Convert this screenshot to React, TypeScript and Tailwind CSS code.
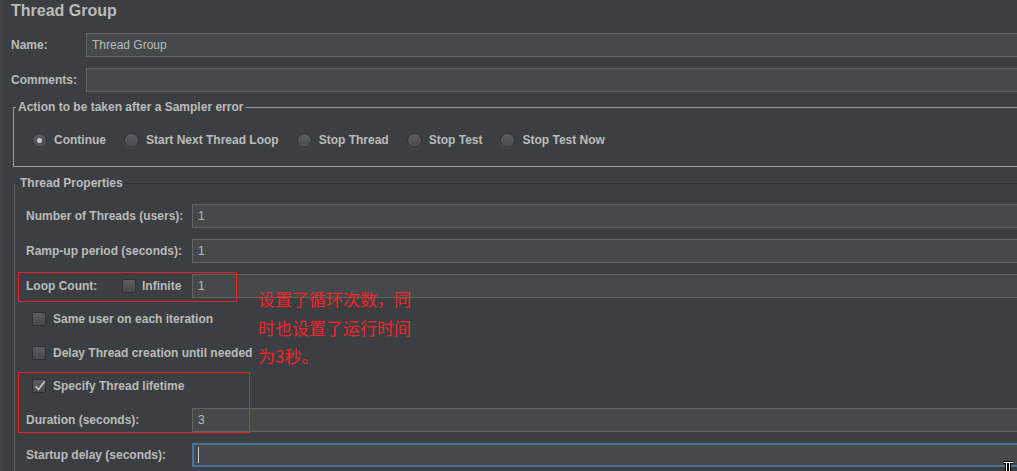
import React from "react";

const Radio = ({ label, checked }: { label: string; checked?: boolean }) => (
  <div className="flex items-center gap-[7px]">
    <div className="w-[15px] h-[15px] rounded-full border border-[#2e3032] bg-[linear-gradient(#5a5e60,#474b4d)] flex items-center justify-center shadow-[0_1px_0_#505355]">
      {checked && <div className="w-[5px] h-[5px] rounded-full bg-[#c8c8c8]" />}
    </div>
    <span className="text-[12px] font-bold leading-[16px]">{label}</span>
  </div>
);

const Check = ({ checked }: { checked?: boolean }) => (
  <div className="w-[14px] h-[14px] rounded-[2px] border border-[#2e3032] bg-[linear-gradient(#595d5f,#474a4c)] relative shrink-0">
    {checked && (
      <svg className="absolute left-[1px] top-[0px]" width="12" height="12" viewBox="0 0 12 12">
        <path d="M1.5 6.2 L4.5 9.5 L10.8 1.2" fill="none" stroke="#c4c4c4" strokeWidth="1.7" />
      </svg>
    )}
  </div>
);

const Input = ({ value, focus }: { value?: string; focus?: boolean }) =>
  focus ? (
    <div className="flex-1 h-[24px] bg-[#45494a] border-2 border-[#4a6f98] pl-[4px] flex items-center">
      <div className="w-[1px] h-[16px] bg-[#c8c8c8]" />
    </div>
  ) : (
    <div className="flex-1 h-[24px] bg-[#45494a] border border-[#646464] pl-[5px] text-[12px] leading-[22px] font-normal">
      {value}
    </div>
  );

const PropRow = ({ label, value, focus }: { label: string; value?: string; focus?: boolean }) => (
  <div className="flex items-center h-[24px]">
    <div className="w-[166px] text-[12px] font-bold">{label}</div>
    <Input value={value} focus={focus} />
  </div>
);

const CheckRow = ({ label, checked }: { label: string; checked?: boolean }) => (
  <div className="flex items-center h-[14px] ml-[6px] gap-[7px]">
    <Check checked={checked} />
    <span className="text-[12px] font-bold">{label}</span>
  </div>
);

export default function App() {
  return (
    <div className="w-[1017px] h-[471px] overflow-hidden relative bg-[#3c3f41] text-[#bbbbbb] font-['Liberation_Sans','Noto_Sans_CJK_SC',sans-serif] shadow-[inset_3px_0_0_#424547]">
      <div className="w-[1045px]">
        <div className="pl-[11px] h-[22px] leading-[22px] text-[16px] font-bold">Thread Group</div>

        <div className="pl-[11px] mt-[11px] flex items-center h-[24px]">
          <div className="w-[75px] text-[12px] font-bold">Name:</div>
          <Input value="Thread Group" />
        </div>
        <div className="pl-[11px] mt-[11px] flex items-center h-[24px]">
          <div className="w-[75px] text-[12px] font-bold">Comments:</div>
          <Input value="" />
        </div>

        <fieldset className="mt-[8px] ml-[13px] border border-[#9b9b9b]">
          <legend className="ml-[2px] px-[2px] text-[12px] font-bold leading-[14px]">Action to be taken after a Sampler error</legend>
          <div className="pt-[18px] pb-[18px] pl-[18px]">
            <div className="flex items-center gap-[18px] h-[16px]">
              <Radio label="Continue" checked />
              <Radio label="Start Next Thread Loop" />
              <Radio label="Stop Thread" />
              <Radio label="Stop Test" />
              <Radio label="Stop Test Now" />
            </div>
          </div>
        </fieldset>

        <fieldset className="mt-[9px] ml-[14px] border border-t-[#2c2e30] border-l-[#64676a] border-r-[#64676a] border-b-[#64676a]">
          <legend className="ml-[3px] px-[2px] text-[12px] font-bold leading-[14px]">Thread Properties</legend>
          <div className="pt-[14px] pl-[11px] pb-[20px]">
            <PropRow label="Number of Threads (users):" value="1" />
            <div className="mt-[11px]">
              <PropRow label="Ramp-up period (seconds):" value="1" />
            </div>
            <div className="mt-[11px] flex items-center h-[24px]">
              <div className="w-[166px] flex items-center">
                <div className="w-[96px] text-[12px] font-bold">Loop Count:</div>
                <Check />
                <span className="ml-[6px] text-[12px] font-bold">Infinite</span>
              </div>
              <Input value="1" />
            </div>
            <div className="mt-[14px]">
              <CheckRow label="Same user on each iteration" />
            </div>
            <div className="mt-[20px]">
              <CheckRow label="Delay Thread creation until needed" />
            </div>
            <div className="mt-[19px]">
              <CheckRow label="Specify Thread lifetime" checked />
            </div>
            <div className="mt-[15px]">
              <PropRow label="Duration (seconds):" value="3" />
            </div>
            <div className="mt-[11px]">
              <PropRow label="Startup delay (seconds):" focus />
            </div>
          </div>
        </fieldset>
      </div>

      <div className="absolute left-[18px] top-[272px] w-[219px] h-[30px] border border-[#e8202a]" />
      <div className="absolute left-[18px] top-[372px] w-[232px] h-[61px] border border-[#e8202a]" />
      <div className="absolute left-[258px] top-[285px] text-[17px] leading-[28.5px] text-[#f2242b] font-['Noto_Sans_CJK_SC',sans-serif]">
        <div>设置了循环次数，同</div>
        <div>时也设置了运行时间</div>
        <div>为3秒。</div>
      </div>

      <svg className="absolute left-[1003px] top-[461px]" width="12" height="10" viewBox="0 0 12 10">
        <path d="M0.5 1.5 H10.5 M3.5 1.5 V10 M6.5 1.5 V10" stroke="#000" strokeWidth="3" fill="none" />
        <path d="M0.5 1.5 H10.5 M3.5 1.5 V10 M6.5 1.5 V10" stroke="#fff" strokeWidth="1" fill="none" />
      </svg>
    </div>
  );
}
